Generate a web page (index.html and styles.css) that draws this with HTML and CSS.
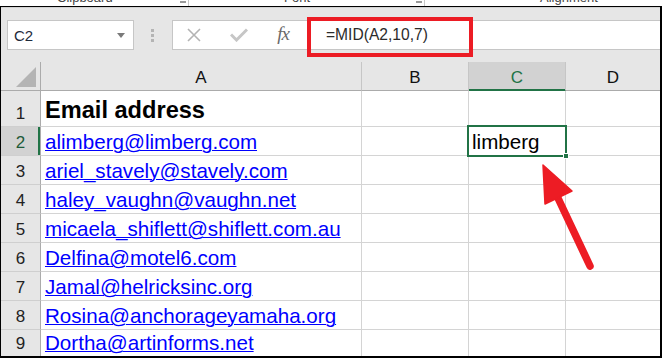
FILE: index.html
```html
<!DOCTYPE html>
<html>
<head>
<meta charset="utf-8">
<link rel="stylesheet" href="styles.css">
</head>
<body>
<div class="ribbon-tail">
  <span class="rl clip">Clipboard</span><span class="launch"></span><span class="vsep"></span>
  <span class="rl font">Font</span><span class="launch"></span><span class="vsep"></span>
  <span class="rl align">Alignment</span>
</div>
<div class="frame">
  <div class="fbar">
    <div class="namebox"><span class="nb-text">C2</span><span class="caret"></span></div>
    <div class="grip"><i></i><i></i><i></i></div>
    <div class="fbox">
      <span class="slot s-x"><svg width="14" height="14" viewBox="0 0 14 14"><path d="M1 1 L13 13 M13 1 L1 13" stroke="#b3b3b3" stroke-width="1.6" fill="none"/></svg></span>
      <span class="slot s-ok"><svg width="18" height="14" viewBox="0 0 18 14"><path d="M1 6.5 L6.5 12 L17 1.5" stroke="#c6c6c6" stroke-width="3" fill="none"/></svg></span>
      <span class="slot s-fx"><span class="fx">fx</span></span>
      <span class="ftext">=MID(A2,10,7)</span>
    </div>
  </div>
  <div class="sheet">
    <div class="row hdr">
      <div class="rh corner"><svg width="22" height="22" viewBox="0 0 22 22"><path d="M21 1 L21 21 L1 21 Z" fill="#b4b4b4"/></svg></div>
      <div class="ch">A</div><div class="ch">B</div><div class="ch sel">C</div><div class="ch last">D</div>
    </div>
    <div class="row r1">
      <div class="rh">1</div><div class="c title">Email address</div><div class="c"></div><div class="c"></div><div class="c last"></div>
    </div>
    <div class="row">
      <div class="rh sel">2</div><div class="c"><a>alimberg@limberg.com</a></div><div class="c"></div><div class="c active">limberg<span class="selbox"><span class="handle"></span></span></div><div class="c last"></div>
    </div>
    <div class="row">
      <div class="rh">3</div><div class="c"><a>ariel_stavely@stavely.com</a></div><div class="c"></div><div class="c"></div><div class="c last"></div>
    </div>
    <div class="row">
      <div class="rh">4</div><div class="c"><a>haley_vaughn@vaughn.net</a></div><div class="c"></div><div class="c"></div><div class="c last"></div>
    </div>
    <div class="row">
      <div class="rh">5</div><div class="c"><a>micaela_shiflett@shiflett.com.au</a></div><div class="c"></div><div class="c"></div><div class="c last"></div>
    </div>
    <div class="row">
      <div class="rh">6</div><div class="c"><a>Delfina@motel6.com</a></div><div class="c"></div><div class="c"></div><div class="c last"></div>
    </div>
    <div class="row">
      <div class="rh">7</div><div class="c"><a>Jamal@helricksinc.org</a></div><div class="c"></div><div class="c"></div><div class="c last"></div>
    </div>
    <div class="row">
      <div class="rh">8</div><div class="c"><a>Rosina@anchorageyamaha.org</a></div><div class="c"></div><div class="c"></div><div class="c last"></div>
    </div>
    <div class="row rlast">
      <div class="rh">9</div><div class="c"><a>Dortha@artinforms.net</a></div><div class="c"></div><div class="c"></div><div class="c last"></div>
    </div>
  </div>
</div>
<div class="callout"></div>
<svg class="arrow" width="662" height="358" viewBox="0 0 662 358">
  <path d="M557 196 L590 266" stroke="#ed1c24" stroke-width="7.5" stroke-linecap="round" fill="none"/>
  <path d="M543 165 L545 204 L572 191 Z" fill="#ed1c24" stroke="#ed1c24" stroke-width="1.5" stroke-linejoin="round"/>
</svg>
</body>
</html>
```
FILE: styles.css
```css
* { box-sizing: border-box; }
html, body { margin: 0; padding: 0; }
body {
  width: 662px;
  height: 358px;
  overflow: hidden;
  position: relative;
  background: #fff;
  font-family: "Liberation Sans", Arial, sans-serif;
  color: #000;
}
.ribbon-tail {
  height: 6px;
  overflow: hidden;
  display: flex;
  align-items: flex-start;
  background: #fff;
}
.rl {
  font-size: 13px;
  line-height: 13px;
  margin-top: -9px;
  color: #444;
  white-space: nowrap;
  flex: none;
}
.rl.clip { margin-left: 57px; width: 123px; }
.rl.font { margin-left: 95px; width: 132px; }
.rl.align { margin-left: 115px; }
.launch {
  flex: none;
  width: 6px;
  height: 2px;
  margin-top: 1px;
  background: #9a9a9a;
  margin-left: 0;
}
.vsep {
  flex: none;
  width: 1px;
  height: 6px;
  margin-left: 2px;
  background: #c8c8c8;
}
.frame {
  border-top: 1px solid #000;
  border-left: 1px solid #000;
  border-right: 2px solid #000;
  border-bottom: 2px solid #000;
  width: 662px;
  height: 352px;
}
.fbar {
  height: 55px;
  background: #e6e6e6;
  border-top: 1px solid #d2d2d2;
  display: flex;
  align-items: center;
  padding-left: 6px;
}
.namebox {
  width: 127px;
  height: 30px;
  background: #fff;
  border: 1px solid #c6c6c6;
  display: flex;
  align-items: center;
  padding-left: 6px;
  padding-right: 8px;
  flex: none;
}
.nb-text {
  font-size: 15px;
  color: #1e2a3a;
}
.caret {
  margin-left: auto;
  width: 0;
  height: 0;
  border-left: 4px solid transparent;
  border-right: 4px solid transparent;
  border-top: 5px solid #7a7a7a;
}
.grip {
  margin-left: 17px;
  width: 3px;
  display: flex;
  flex-direction: column;
  gap: 2px;
  flex: none;
}
.grip i {
  display: block;
  width: 3px;
  height: 3px;
  background: #b4b4b4;
}
.fbox {
  margin-left: 18px;
  flex: 1;
  height: 30px;
  background: #fff;
  border: 1px solid #c6c6c6;
  border-right: none;
  display: flex;
  align-items: center;
}
.slot {
  display: flex;
  align-items: center;
  justify-content: center;
  height: 100%;
  flex: none;
}
.s-x { width: 42px; }
.s-ok { width: 48px; }
.s-fx { width: 40px; }
.fx {
  font-family: "Liberation Serif", "Times New Roman", serif;
  font-style: italic;
  font-size: 19px;
  color: #6a6a6a;
  letter-spacing: -1px;
  margin-top: -2px;
}
.ftext {
  margin-left: 23px;
  font-size: 15.6px;
  color: #2b2b2b;
}
.sheet { }
.row {
  display: grid;
  grid-template-columns: 40px 321px 107px 97px 94px;
  height: 29px;
}
.row.r1 { height: 36px; }
.row.rlast { height: 26px; }
.row.rlast > div { border-bottom: none; }
.rh {
  background: #e6e6e6;
  border-right: 1px solid #ababab;
  border-bottom: 1px solid #cfcfcf;
  display: flex;
  align-items: flex-end;
  justify-content: center;
  font-size: 17px;
  line-height: 24px;
  color: #222;
}
.rh.sel {
  background: #d2d2d2;
  color: #1d5a38;
  box-shadow: inset -2px 0 0 #217346;
}
.rh.corner {
  align-items: flex-end;
  justify-content: flex-end;
  padding: 0 3px 2px 0;
}
.row.hdr .rh { border-bottom: 1px solid #ababab; }
.ch {
  background: #e6e6e6;
  border-right: 1px solid #c6c6c6;
  border-bottom: 1px solid #ababab;
  display: flex;
  align-items: flex-end;
  justify-content: center;
  font-size: 17px;
  line-height: 24px;
  color: #111;
}
.ch.sel {
  background: #d2d2d2;
  color: #217346;
  border-bottom-color: #217346;
  box-shadow: inset 0 -1px 0 #217346;
}
.ch.last, .c.last { border-right: none; }
.c {
  border-right: 1px solid #d4d4d4;
  border-bottom: 1px solid #d4d4d4;
  display: flex;
  align-items: flex-end;
  padding: 0 0 1px 4px;
  font-size: 20.6px;
  line-height: 24px;
  white-space: nowrap;
  overflow: visible;
}
.c a {
  color: #0000ff;
  text-decoration: underline;
  text-underline-offset: 1px;
  text-decoration-thickness: 1px;
}
.c.title {
  font-weight: bold;
  font-size: 23.6px;
  line-height: 28px;
  padding-bottom: 2px;
}
.c.active {
  position: relative;
  padding-left: 3px;
}
.selbox {
  position: absolute;
  left: -2px;
  top: -2px;
  width: 100px;
  height: 32px;
  border: 2px solid #217346;
}
.handle {
  position: absolute;
  right: -4px;
  bottom: -4px;
  width: 6px;
  height: 6px;
  background: #217346;
  border: 1px solid #fff;
}
.callout {
  position: absolute;
  left: 307px;
  top: 17px;
  width: 166px;
  height: 40px;
  border: 4px solid #ec1c24;
}
.arrow {
  position: absolute;
  left: 0;
  top: 0;
  pointer-events: none;
}
```
